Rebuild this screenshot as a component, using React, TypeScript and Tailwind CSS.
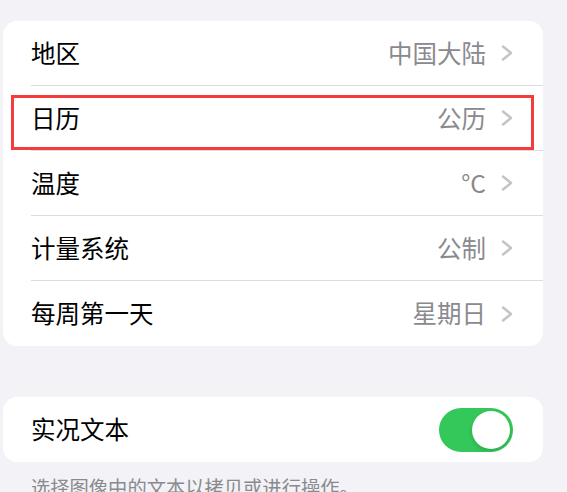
import React from "react";

type Row = { label: string; value: string };

const rows: Row[] = [
    { label: "地区", value: "中国大陆" },
    { label: "日历", value: "公历" },
    { label: "温度", value: "°C" },
    { label: "计量系统", value: "公制" },
    { label: "每周第一天", value: "星期日" },
];

const Chevron: React.FC = () => (
    <svg width="12" height="16" viewBox="0 0 12 16" fill="none" className="shrink-0">
        <polyline points="2,1.5 10,8 2,14.5" stroke="#c4c4c7" strokeWidth="2.5" strokeLinecap="round" strokeLinejoin="round" />
    </svg>
);

const App: React.FC = () => {
    return (
        <div
            className="w-[567px] h-[492px] overflow-hidden bg-[#f2f2f7] pt-[21px] pl-[3px] pr-[24px]"
            style={{ fontFamily: '"Noto Sans CJK SC", "Noto Sans", sans-serif' }}
        >
            <div className="bg-white rounded-[14px] flex flex-col">
                {rows.map((row, i) => (
                    <div key={row.label} className="relative h-[65px] pl-[28px] flex">
                        <div
                            className={`flex-1 flex items-center justify-between pr-[30px] ${
                                i < rows.length - 1 ? "border-b border-[#dcdce0]" : ""
                            }`}
                        >
                            <span className="text-[24.5px] text-black leading-none">{row.label}</span>
                            <div className="flex items-center gap-[15px]">
                                <span className="text-[24.5px] text-[#8a8a8e] leading-none">{row.value}</span>
                                <Chevron />
                            </div>
                        </div>
                        {i === 1 && (
                            <div className="absolute left-[8px] right-[9px] top-[9px] bottom-[1px] border-[3px] border-[#f43c3c]" />
                        )}
                    </div>
                ))}
            </div>

            <div className="mt-[51px] bg-white rounded-[14px] h-[65px] pl-[28px] pr-[30px] flex items-center justify-between">
                <span className="text-[24.5px] text-black leading-none">实况文本</span>
                <div className="w-[74px] h-[44px] rounded-full bg-[#34c759] flex items-center justify-end pr-[3px]">
                    <div className="w-[38px] h-[38px] rounded-full bg-white shadow-[0_2px_4px_rgba(0,0,0,0.15)]" />
                </div>
            </div>

            <p className="mt-[13px] pl-[28px] text-[19.3px] text-[#8a8a8e] leading-[24px] whitespace-nowrap">
                选择图像中的文本以拷贝或进行操作。
            </p>
        </div>
    );
};

export default App;
